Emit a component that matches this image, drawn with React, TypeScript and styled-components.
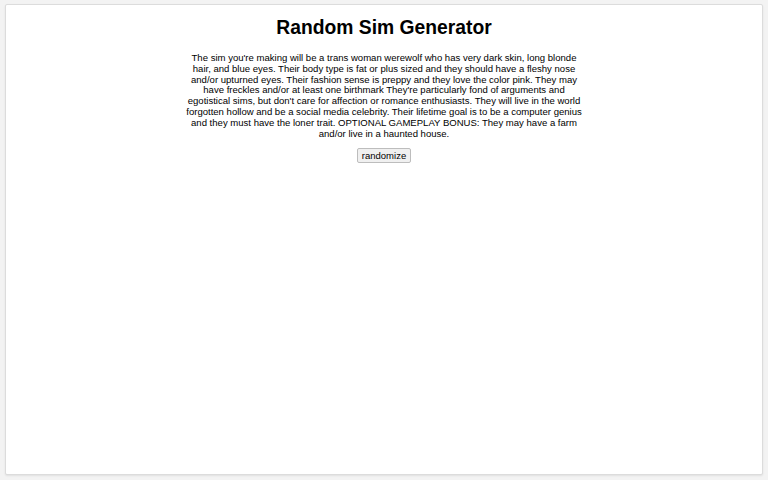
import React, { useState } from 'react';
import styled, { createGlobalStyle } from 'styled-components';

const GlobalStyle = createGlobalStyle`
  html, body {
    margin: 0;
    padding: 0;
    background: #f3f3f3;
  }
  body {
    font-family: "Liberation Sans", Arial, sans-serif;
    color: #000;
  }
`;

const DESCRIPTION =
  "The sim you're making will be a trans woman werewolf who has very dark skin, long blonde hair, and blue eyes. Their body type is fat or plus sized and they should have a fleshy nose and/or upturned eyes. Their fashion sense is preppy and they love the color pink. They may have freckles and/or at least one birthmark They're particularly fond of arguments and egotistical sims, but don't care for affection or romance enthusiasts. They will live in the world forgotten hollow and be a social media celebrity. Their lifetime goal is to be a computer genius and they must have the loner trait. OPTIONAL GAMEPLAY BONUS: They may have a farm and/or live in a haunted house.";

const App = () => {
  const [text] = useState(DESCRIPTION);

  return (
    <>
      <GlobalStyle />
      <Page>
        <Card>
          <Title>Random Sim Generator</Title>
          <Description>{text}</Description>
          <RandomizeBtn>randomize</RandomizeBtn>
        </Card>
      </Page>
    </>
  );
};

const Page = styled.div`
  height: 480px;
  padding: 4px 5px 5px 5px;
  box-sizing: border-box;
`;

const Card = styled.main`
  height: 100%;
  box-sizing: border-box;
  background: #fff;
  border: 1px solid #dcdcdc;
  border-radius: 2px;
  box-shadow: 0 1px 2px rgba(0, 0, 0, 0.08);
  display: flex;
  flex-direction: column;
  align-items: center;
  padding-top: 13px;
`;

const Title = styled.h1`
  font-size: 19.3px;
  font-weight: 700;
  margin: 0 0 15px 0;
  line-height: 20px;
`;

const Description = styled.p`
  width: 400px;
  margin: 0 0 9px 0;
  font-size: 9.55px;
  line-height: 10.8px;
  text-align: center;
`;

const RandomizeBtn = styled.button`
  font-family: "Liberation Sans", Arial, sans-serif;
  font-size: 9.5px;
  padding: 1px 4px;
  background: #f0f0f0;
  border: 1px solid #bdbdbd;
  border-radius: 2px;
  color: #000;
`;

export default App;
